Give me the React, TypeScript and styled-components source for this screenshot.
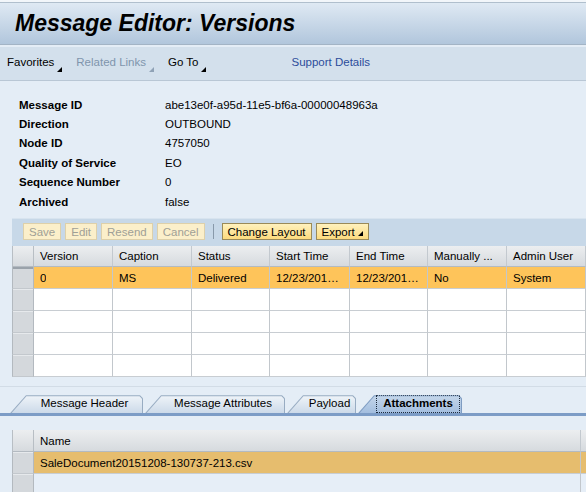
import React from 'react';
import styled, { createGlobalStyle, css } from 'styled-components';

const GlobalStyle = createGlobalStyle`
  html, body { margin: 0; padding: 0; }
  body {
    width: 586px;
    height: 492px;
    overflow: hidden;
    background: #e4edf6;
    font-family: "Liberation Sans", Arial, sans-serif;
    font-size: 11.5px;
    color: #000;
  }
  * { box-sizing: border-box; }
`;

const Page = styled.div`
  display: flex;
  flex-direction: column;
  width: 586px;
  height: 492px;
  overflow: hidden;
  & > * { flex-shrink: 0; }
`;

const TitleBar = styled.header`
  height: 45px;
  border-top: 2px solid #f2f6fa;
  box-shadow: inset 0 1px 0 #b0bfcd;
  background: linear-gradient(#e0eaf4, #b1c6dc);
  border-bottom: 1px solid #a3b4c5;
  display: flex;
  align-items: center;
  padding-left: 15px;
`;

const Title = styled.h1`
  margin: 0;
  font-size: 23px;
  font-weight: 700;
  font-style: italic;
  color: #000;
  line-height: 1;
`;

const MenuBar = styled.nav`
  margin-top: 2px;
  height: 34px;
  background: #d3e0ec;
  border-bottom: 1px solid #b9c7d5;
  display: flex;
  align-items: center;
  padding: 0 0 3px 7px;
`;

const MenuItem = styled.span<{ $muted?: boolean; $link?: boolean; $space?: number }>`
  display: inline-flex;
  align-items: flex-end;
  margin-right: ${p => p.$space ?? 14}px;
  color: ${p => (p.$muted ? '#7f95ad' : p.$link ? '#2c4d9b' : '#000')};
  font-size: 11.5px;
`;

const DropArrow = styled.i<{ $color?: string }>`
  display: inline-block;
  width: 0;
  height: 0;
  margin: 0 0 -4px 3px;
  border-left: 5px solid transparent;
  border-bottom: 5px solid ${p => p.$color ?? '#000'};
`;

const Fields = styled.dl`
  margin: 0;
  padding: 14px 0 0 19px;
  display: grid;
  grid-template-columns: 146px 1fr;
  grid-auto-rows: 19.4px;
  align-items: center;
`;

const Label = styled.dt`
  font-weight: 700;
`;

const Value = styled.dd`
  margin: 0;
`;

const TablePanel = styled.section`
  margin: 7px 0 0 12px;
`;

const TableToolbar = styled.div`
  height: 28px;
  background: #c7d8e8;
  border-top: 1px solid #d8e4ef;
  display: flex;
  align-items: center;
  gap: 4px;
  padding: 0 0 2px 11px;
`;

const Button = styled.button<{ $enabled?: boolean }>`
  height: 17px;
  padding: 0 5px;
  font-family: inherit;
  font-size: 11.5px;
  line-height: 14px;
  display: inline-flex;
  align-items: center;
  border-radius: 0;
  ${p =>
    p.$enabled
      ? css`
          background: linear-gradient(#fff1bd, #fcdb7e);
          border: 1px solid #9a8a58;
          color: #000;
        `
      : css`
          background: #fbefca;
          border: 1px solid #ddd0aa;
          color: #a09f96;
        `}
`;

const ToolSeparator = styled.span`
  width: 1px;
  height: 15px;
  background: #8899aa;
  margin: 0 4px;
`;

const Grid = styled.div<{ $cols: string }>`
  display: grid;
  grid-template-columns: ${p => p.$cols};
`;

const HeadCell = styled.div<{ $selector?: boolean; $h?: number }>`
  height: ${p => p.$h ?? 21}px;
  padding-left: 6px;
  display: flex;
  align-items: center;
  white-space: nowrap;
  overflow: hidden;
  background: linear-gradient(#eceef0, #d6dade);
  border-bottom: 1px solid #b3bac1;
  border-right: 1px solid ${p => (p.$selector ? '#b8bec4' : '#c3c9cf')};
  ${p => p.$selector && css`border-left: 1px solid #b8bec4;`}
`;

const Selector = styled.div<{ $lead?: boolean; $h?: number }>`
  height: ${p => p.$h ?? 22}px;
  background: #d4d8dc;
  border-left: 1px solid #b3b9bf;
  border-right: 1px solid #b3b9bf;
  border-bottom: 1px solid #c3c8cd;
  box-shadow: ${p => (p.$lead ? 'inset 0 2px 0 #9aa2aa' : 'inset 0 1px 0 #e6e9ec')};
`;

const Cell = styled.div<{ $bg?: string; $h?: number }>`
  height: ${p => p.$h ?? 22}px;
  padding: 0 6px;
  display: flex;
  align-items: center;
  white-space: nowrap;
  overflow: hidden;
  background: ${p => p.$bg ?? '#fff'};
  border-right: 1px solid #c2c7cc;
  border-bottom: 1px solid #c8cdd2;
`;

const CellText = styled.span`
  overflow: hidden;
  text-overflow: ellipsis;
`;

const Divider = styled.hr`
  margin: 9px 0 0;
  border: 0;
  border-top: 1px solid #d2dce6;
  height: 0;
`;

const TabStrip = styled.div`
  margin-top: 8px;
  display: flex;
  align-items: flex-end;
  gap: 2px;
  padding-left: 10px;
  border-bottom: 3px solid #7c9cc6;
`;

const Tab = styled.div<{ $w: number; $active?: boolean }>`
  position: relative;
  width: ${p => p.$w}px;
  height: 18px;
  padding-left: 16px;
  display: flex;
  align-items: flex-end;
  justify-content: center;
  font-weight: ${p => (p.$active ? 700 : 400)};
  clip-path: polygon(0 100%, 16px 0, calc(100% - 3px) 0, 100% 3px, 100% 100%);
  background: ${p => (p.$active ? '#7e9cc2' : '#98acc2')};
  &::before {
    content: '';
    position: absolute;
    inset: 1px 1px 0 1px;
    clip-path: polygon(0.4px 100%, 15.4px 0, calc(100% - 2.5px) 0, 100% 2.5px, 100% 100%);
    background: ${p =>
      p.$active
        ? 'linear-gradient(#c4d6ea, #a3bedf)'
        : 'linear-gradient(#eef3f8, #ccdae9)'};
  }
`;

const TabLabel = styled.span<{ $focus?: boolean }>`
  position: relative;
  line-height: 13px;
  padding: 1px 6px 2px;
  border: 1px solid transparent;
  ${p =>
    p.$focus &&
    css`
      border-color: #1c2b3c;
      border-style: dotted;
    `}
`;

const AttachPanel = styled.section`
  margin: 14px 0 0 12px;
`;

const columns = ['Version', 'Caption', 'Status', 'Start Time', 'End Time', 'Manually ...', 'Admin User'];
const firstRow = ['0', 'MS', 'Delivered', '12/23/2015 13:07:37', '12/23/2015 13:07:38', 'No', 'System'];

const fields: [string, string][] = [
  ['Message ID', 'abe13e0f-a95d-11e5-bf6a-00000048963a'],
  ['Direction', 'OUTBOUND'],
  ['Node ID', '4757050'],
  ['Quality of Service', 'EO'],
  ['Sequence Number', '0'],
  ['Archived', 'false'],
];

const tabs = [
  { label: 'Message Header', w: 133 },
  { label: 'Message Attributes', w: 140 },
  { label: 'Payload', w: 69 },
  { label: 'Attachments', w: 104, active: true },
];

const VERSION_COLS = '22px 79px 79px 78px 80px 78px 79px 1fr';
const ATTACH_COLS = '22px 547px 1fr';
const SELECTED = '#fec45a';

export default function App() {
  return (
    <Page>
      <GlobalStyle />
      <TitleBar>
        <Title>Message Editor: Versions</Title>
      </TitleBar>

      <MenuBar>
        <MenuItem>
          Favorites<DropArrow />
        </MenuItem>
        <MenuItem $muted>
          Related Links<DropArrow $color="#8fa2b6" />
        </MenuItem>
        <MenuItem $space={85}>
          Go To<DropArrow />
        </MenuItem>
        <MenuItem $link>Support Details</MenuItem>
      </MenuBar>

      <Fields>
        {fields.map(([k, v]) => (
          <React.Fragment key={k}>
            <Label>{k}</Label>
            <Value>{v}</Value>
          </React.Fragment>
        ))}
      </Fields>

      <TablePanel>
        <TableToolbar>
          <Button>Save</Button>
          <Button>Edit</Button>
          <Button>Resend</Button>
          <Button>Cancel</Button>
          <ToolSeparator />
          <Button $enabled>Change Layout</Button>
          <Button $enabled>
            Export<DropArrow />
          </Button>
        </TableToolbar>
        <Grid $cols={VERSION_COLS}>
          <HeadCell $selector />
          {columns.map(c => (
            <HeadCell key={c}>{c}</HeadCell>
          ))}
          {[0, 1, 2, 3, 4].map(r => (
            <React.Fragment key={r}>
              <Selector $lead={r === 0} />
              {columns.map((c, i) => (
                <Cell key={c} $bg={r === 0 ? SELECTED : '#fff'}>
                  <CellText>{r === 0 ? firstRow[i] : ''}</CellText>
                </Cell>
              ))}
            </React.Fragment>
          ))}
        </Grid>
      </TablePanel>

      <Divider />

      <TabStrip>
        {tabs.map(t => (
          <Tab key={t.label} $w={t.w} $active={t.active}>
            <TabLabel $focus={t.active}>{t.label}</TabLabel>
          </Tab>
        ))}
      </TabStrip>

      <AttachPanel>
        <Grid $cols={ATTACH_COLS}>
          <HeadCell $selector $h={22} />
          <HeadCell $h={22}>Name</HeadCell>
          <HeadCell $h={22} />
          <Selector />
          <Cell $bg="#e6bd6e">SaleDocument20151208-130737-213.csv</Cell>
          <Cell $bg="#e6bd6e" />
          <Selector />
          <Cell $bg="#e6eef7" />
          <Cell $bg="#e6eef7" />
        </Grid>
      </AttachPanel>
    </Page>
  );
}
